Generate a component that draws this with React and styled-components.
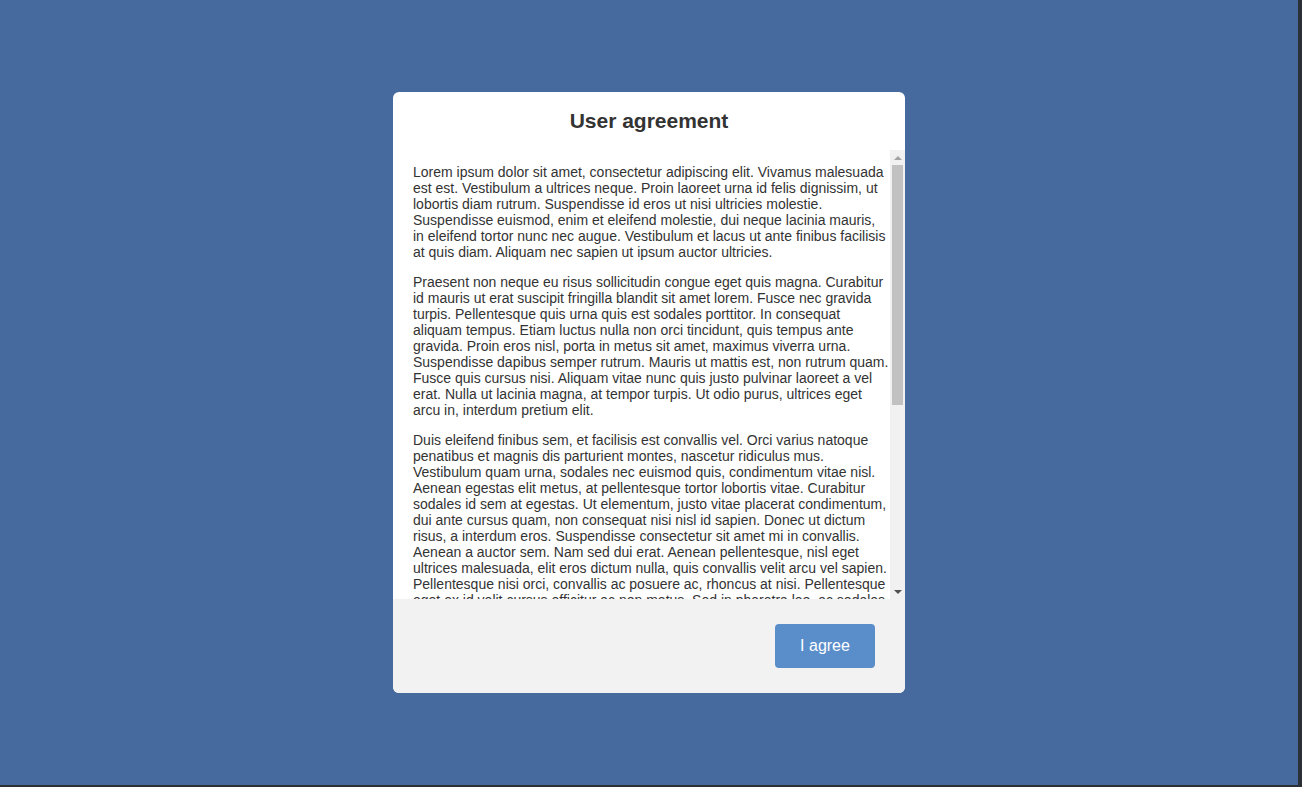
import React from "react";
import styled, { createGlobalStyle } from "styled-components";

const GlobalStyle = createGlobalStyle`
  html, body {
    margin: 0;
    padding: 0;
    background-color: #2b2f36;
    overflow: hidden;
  }
  body {
    font-family: "Liberation Sans", Arial, sans-serif;
    font-size: 14px;
    color: #333;
  }
`;

const Page = styled.div`
  width: calc(100vw - 4px);
  height: calc(100vh - 2px);
  background-color: #466a9d;
  display: flex;
  align-items: center;
  justify-content: center;
`;

const Modal = styled.div`
  width: 512px;
  display: flex;
  flex-direction: column;
  background-color: #fff;
  border-radius: 6px;
  overflow: hidden;
`;

const Header = styled.div`
  height: 58px;
  display: flex;
  align-items: center;
  justify-content: center;
`;

const Title = styled.h2`
  margin: 0;
  font-size: 21px;
  font-weight: bold;
  color: #333;
`;

const BodyRow = styled.div`
  height: 449px;
  display: flex;
`;

const Body = styled.div`
  flex: 1;
  min-width: 0;
  overflow-y: auto;
  padding-left: 20px;
  line-height: normal;
  scrollbar-width: none;

  &::-webkit-scrollbar {
    display: none;
  }

  p {
    margin: 14px 0;
  }
`;

const Track = styled.div`
  width: 15px;
  flex-shrink: 0;
  display: flex;
  flex-direction: column;
  background-color: #f1f1f1;
`;

const ArrowButton = styled.div`
  height: 15px;
  flex-shrink: 0;
  display: flex;
  align-items: center;
  justify-content: center;

  &::after {
    content: "";
    width: 0;
    height: 0;
    border-left: 4px solid transparent;
    border-right: 4px solid transparent;
    ${(props) =>
      props.down
        ? `border-top: 4px solid ${props.color};`
        : `border-bottom: 4px solid ${props.color};`}
  }
`;

const Thumb = styled.div`
  height: 240px;
  margin: 0 2px;
  flex-shrink: 0;
  background-color: #c1c1c1;
`;

const TrackFill = styled.div`
  flex: 1;
`;

const Footer = styled.div`
  display: flex;
  justify-content: flex-end;
  padding: 25px 30px;
  background-color: #f2f2f2;
`;

const AgreeButton = styled.button`
  width: 100px;
  height: 44px;
  border: none;
  border-radius: 4px;
  background-color: #5a8ecb;
  color: #fff;
  font-family: "Liberation Sans", Arial, sans-serif;
  font-size: 16px;
  cursor: pointer;
`;

const paragraphs = [
  "Lorem ipsum dolor sit amet, consectetur adipiscing elit. Vivamus malesuada est est. Vestibulum a ultrices neque. Proin laoreet urna id felis dignissim, ut lobortis diam rutrum. Suspendisse id eros ut nisi ultricies molestie. Suspendisse euismod, enim et eleifend molestie, dui neque lacinia mauris, in eleifend tortor nunc nec augue. Vestibulum et lacus ut ante finibus facilisis at quis diam. Aliquam nec sapien ut ipsum auctor ultricies.",
  "Praesent non neque eu risus sollicitudin congue eget quis magna. Curabitur id mauris ut erat suscipit fringilla blandit sit amet lorem. Fusce nec gravida turpis. Pellentesque quis urna quis est sodales porttitor. In consequat aliquam tempus. Etiam luctus nulla non orci tincidunt, quis tempus ante gravida. Proin eros nisl, porta in metus sit amet, maximus viverra urna. Suspendisse dapibus semper rutrum. Mauris ut mattis est, non rutrum quam. Fusce quis cursus nisi. Aliquam vitae nunc quis justo pulvinar laoreet a vel erat. Nulla ut lacinia magna, at tempor turpis. Ut odio purus, ultrices eget arcu in, interdum pretium elit.",
  "Duis eleifend finibus sem, et facilisis est convallis vel. Orci varius natoque penatibus et magnis dis parturient montes, nascetur ridiculus mus. Vestibulum quam urna, sodales nec euismod quis, condimentum vitae nisl. Aenean egestas elit metus, at pellentesque tortor lobortis vitae. Curabitur sodales id sem at egestas. Ut elementum, justo vitae placerat condimentum, dui ante cursus quam, non consequat nisi nisl id sapien. Donec ut dictum risus, a interdum eros. Suspendisse consectetur sit amet mi in convallis. Aenean a auctor sem. Nam sed dui erat. Aenean pellentesque, nisl eget ultrices malesuada, elit eros dictum nulla, quis convallis velit arcu vel sapien. Pellentesque nisi orci, convallis ac posuere ac, rhoncus at nisi. Pellentesque eget ex id velit cursus efficitur ac non metus. Sed in pharetra leo, ac sodales massa. Integer vitae tellus eget mi faucibus volutpat. Nunc at lorem vel nisl tincidunt dictum nec vel lectus. Maecenas blandit lacus id libero tristique.",
  "Nam eget nisi lectus. Phasellus vitae lacus ac ipsum ullamcorper faucibus. Sed nec lectus erat. Cras tincidunt justo sed urna rhoncus, non suscipit metus aliquet. Vivamus sit amet massa at urna hendrerit consequat. Mauris pretium metus in ante sodales, a malesuada elit lobortis. Morbi viverra, est at aliquam convallis, purus nunc facilisis nisl, vitae ultrices mi erat eget leo. Quisque sagittis mauris in quam maximus, sed ullamcorper turpis pharetra. Integer ut felis quis odio tempor consequat.",
  "Etiam dictum, risus non efficitur placerat, lectus ante luctus urna, quis volutpat nibh arcu id justo. Nulla facilisi. Donec sed ligula sed nunc finibus aliquam. Curabitur at elit vitae sapien sodales mollis a non augue. Vivamus ac neque ut augue congue tempor. Sed eget orci vel lorem feugiat commodo.",
  "Fusce at turpis et tortor pulvinar porta. Proin sit amet ante sed velit aliquet vestibulum. Quisque in lacus non ex placerat interdum. Morbi faucibus, nisl vitae laoreet aliquam, sem magna efficitur mi, nec ultricies dui sem ac arcu.",
];

function App() {
  return (
    <>
      <GlobalStyle />
      <Page>
        <Modal>
          <Header>
            <Title>User agreement</Title>
          </Header>
          <BodyRow>
            <Body>
              {paragraphs.map((text, i) => (
                <p key={i}>{text}</p>
              ))}
            </Body>
            <Track>
              <ArrowButton color="#a3a3a3" />
              <Thumb />
              <TrackFill />
              <ArrowButton down color="#505050" />
            </Track>
          </BodyRow>
          <Footer>
            <AgreeButton>I agree</AgreeButton>
          </Footer>
        </Modal>
      </Page>
    </>
  );
}

export default App;
